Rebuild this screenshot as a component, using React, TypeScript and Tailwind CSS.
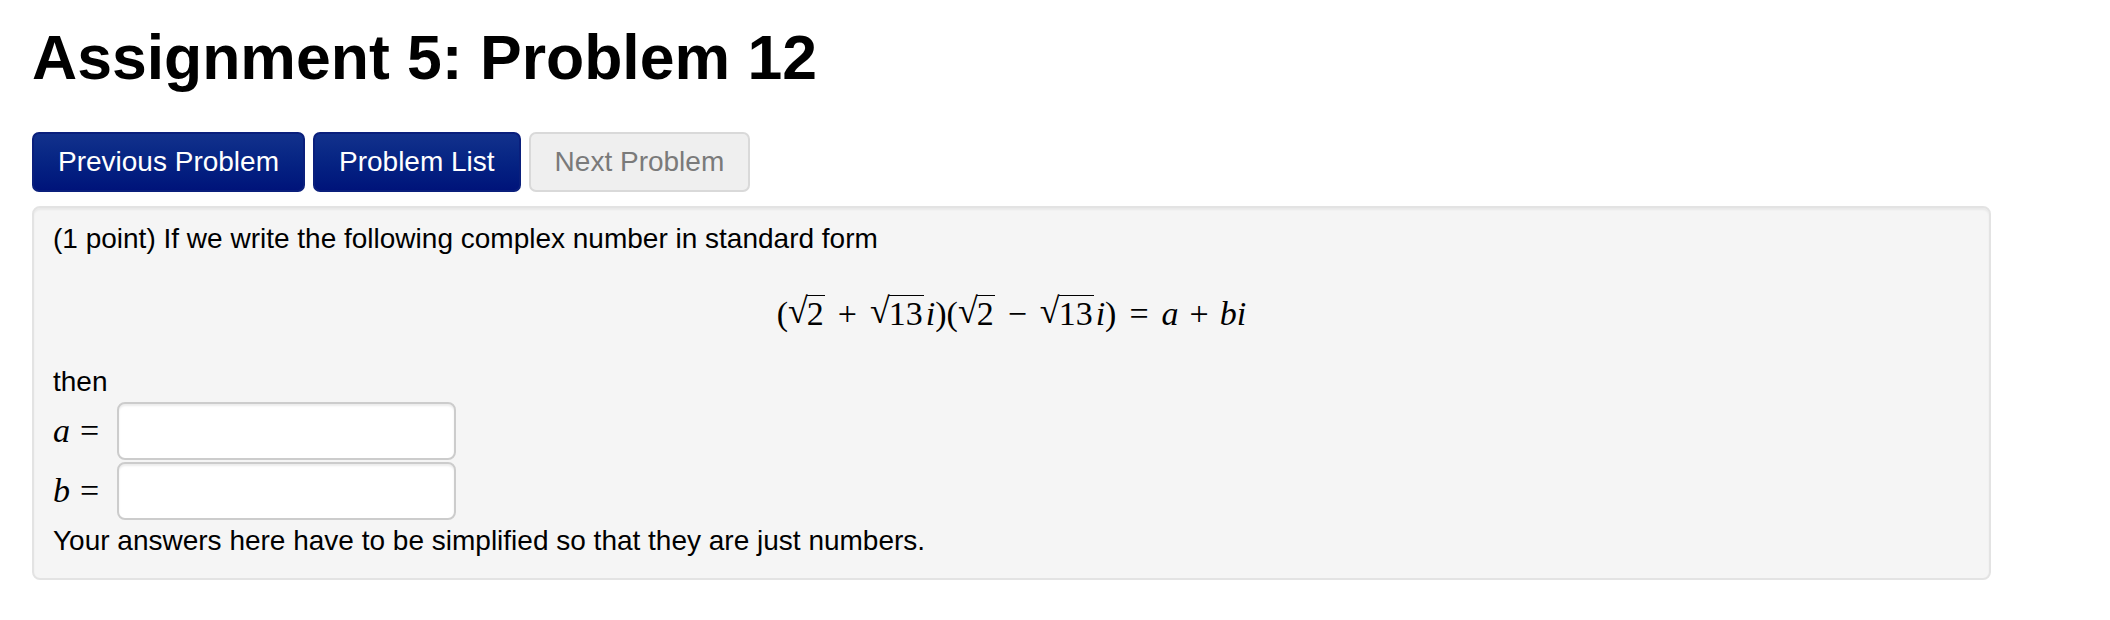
import React from 'react';

const serif = "font-['Liberation_Serif','Times_New_Roman',serif]";

const Sqrt = ({ children }: { children: React.ReactNode }) => (
  <span className="inline-flex items-start">
    <span className="leading-none text-[36px] -mr-[1px] translate-y-[-2px]">√</span>
    <span className="inline-block border-t-[1.5px] border-black leading-none pt-[1px] pr-[1px]">
      {children}
    </span>
  </span>
);

const Equation = () => (
  <div className={`${serif} mt-[35px] text-center text-[34px] leading-[40px]`}>
    <span className="inline-flex items-baseline">
      <span>(</span>
      <Sqrt>2</Sqrt>
      <span className="mx-[13px]">+</span>
      <Sqrt>13</Sqrt>
      <i className="ml-[2px]">i</i>
      <span>)(</span>
      <Sqrt>2</Sqrt>
      <span className="mx-[13px]">−</span>
      <Sqrt>13</Sqrt>
      <i className="ml-[2px]">i</i>
      <span>)</span>
      <span className="mx-[13px]">=</span>
      <i>a</i>
      <span className="mx-[11px]">+</span>
      <i>b</i>
      <i>i</i>
    </span>
  </div>
);

const AnswerRow = ({ name, className = '' }: { name: string; className?: string }) => (
  <div className={`flex h-[58px] items-center ${className}`}>
    <span className={`${serif} w-[64px] text-[34px] leading-[40px]`}>
      <i>{name}</i>
      <span className="ml-[10px]">=</span>
    </span>
    <input
      type="text"
      className="h-full w-[339px] rounded-[8px] border-2 border-[#cccccc] bg-white shadow-[inset_0_2px_2px_rgba(0,0,0,0.075)] outline-none"
    />
  </div>
);

const NavButton = ({ label, disabled = false }: { label: string; disabled?: boolean }) => (
  <button
    type="button"
    disabled={disabled}
    className={
      disabled
        ? 'flex h-[60px] items-center rounded-[7px] border-2 border-[#d9d9d9] bg-[#efefef] px-[24px] text-[28px] leading-none text-[#7a7a7a]'
        : 'flex h-[60px] items-center rounded-[7px] border-2 border-[#0a1f7c] bg-linear-to-b from-[#12318c] to-[#00137a] px-[24px] text-[28px] leading-none text-white'
    }
  >
    {label}
  </button>
);

export default function App() {
  return (
    <div className="min-h-screen bg-white pl-[32px] pt-[22px] font-['Liberation_Sans',Arial,sans-serif] text-black">
      <h1 className="m-0 text-[62.5px] font-bold leading-[70px]">Assignment 5: Problem 12</h1>

      <div className="mt-[40px] flex gap-2">
        <NavButton label="Previous Problem" />
        <NavButton label="Problem List" />
        <NavButton label="Next Problem" disabled />
      </div>

      <div className="mt-[14px] w-[1959px] rounded-[8px] border-2 border-[#e3e3e3] bg-[#f5f5f5] px-[19px] pt-[11px] pb-[17px] text-[28px] leading-[40px] shadow-[inset_0_2px_2px_rgba(0,0,0,0.05)]">
        <p>(1 point) If we write the following complex number in standard form</p>
        <Equation />
        <p className="mt-[28px]">then</p>
        <AnswerRow name="a" />
        <AnswerRow name="b" className="mt-[2px]" />
        <p className="mt-[1px]">Your answers here have to be simplified so that they are just numbers.</p>
      </div>
    </div>
  );
}
